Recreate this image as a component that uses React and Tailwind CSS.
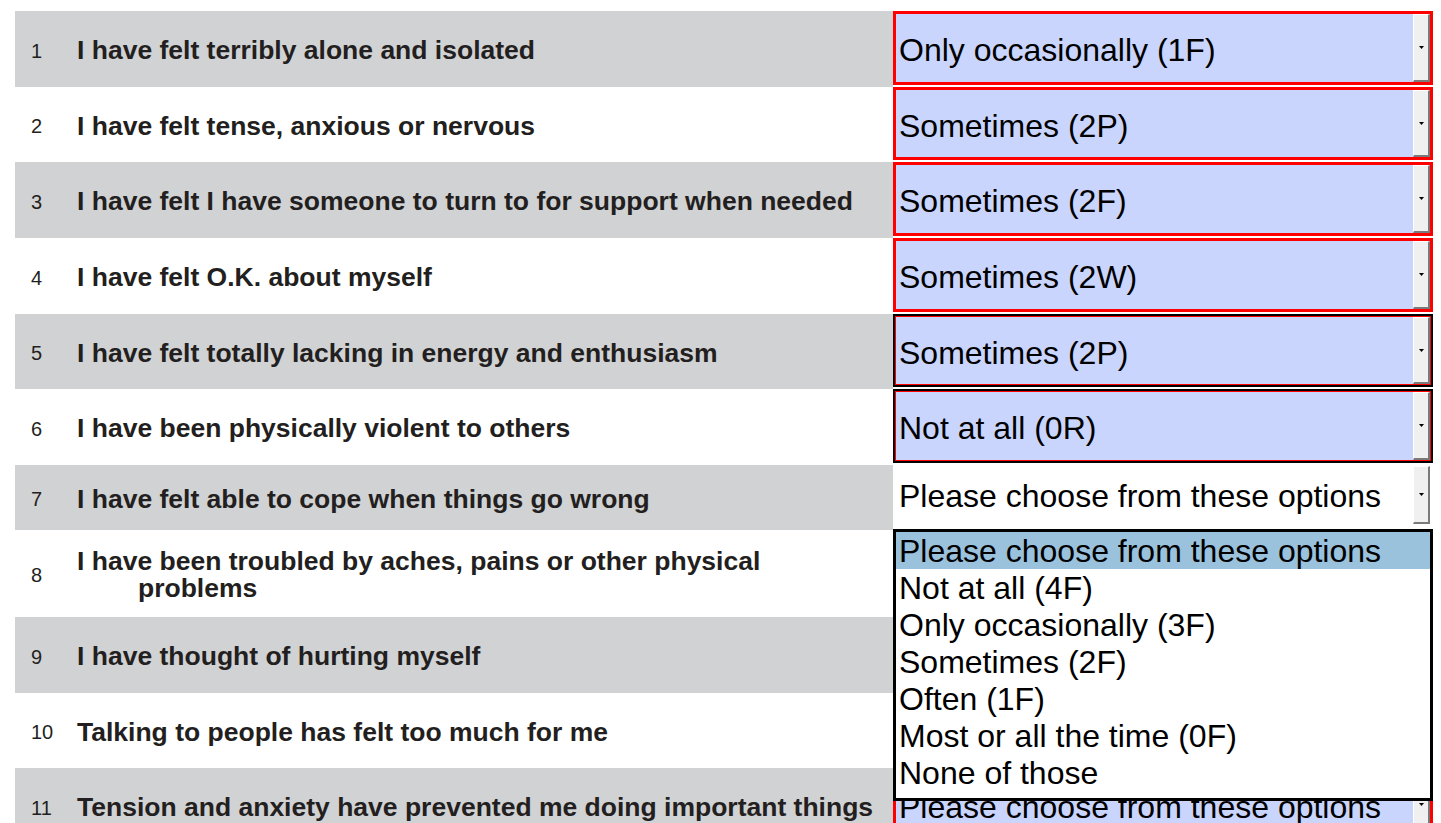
import React from "react";

const rows = [
    { n: 1, text: "I have felt terribly alone and isolated", h: "h-[76px]", kind: "red", value: "Only occasionally (1F)" },
    { n: 2, text: "I have felt tense, anxious or nervous", h: "h-[75px]", kind: "red", value: "Sometimes (2P)" },
    { n: 3, text: "I have felt I have someone to turn to for support when needed", h: "h-[76px]", kind: "red", value: "Sometimes (2F)" },
    { n: 4, text: "I have felt O.K. about myself", h: "h-[76px]", kind: "red", value: "Sometimes (2W)" },
    { n: 5, text: "I have felt totally lacking in energy and enthusiasm", h: "h-[75px]", kind: "focus", value: "Sometimes (2P)" },
    { n: 6, text: "I have been physically violent to others", h: "h-[76px]", kind: "focus", value: "Not at all (0R)" },
    { n: 7, text: "I have felt able to cope when things go wrong", h: "h-[65px]", kind: "plain", value: "Please choose from these options" },
    // rows 8-10: their selects sit under the open list, so no text shown
    { n: 8, text: "I have been troubled by aches, pains or other physical problems", h: "h-[87px]", kind: "red", value: "" },
    { n: 9, text: "I have thought of hurting myself", h: "h-[76px]", kind: "red", value: "" },
    { n: 10, text: "Talking to people has felt too much for me", h: "h-[75px]", kind: "red", value: "" },
    { n: 11, text: "Tension and anxiety have prevented me doing important things", h: "h-[76px]", kind: "red", value: "Please choose from these options" },
];

const options = [
    "Please choose from these options",
    "Not at all (4F)",
    "Only occasionally (3F)",
    "Sometimes (2F)",
    "Often (1F)",
    "Most or all the time (0F)",
    "None of those",
];

const ArrowButton = ({ className = "" }) => (
    <div className={"flex w-[17px] shrink-0 items-center justify-center border-t border-l border-white border-r-2 border-b-2 border-r-[#7a7a7a] border-b-[#7a7a7a] bg-[#f0f0f0] " + className}>
        <svg width="5" height="3" viewBox="0 0 5 3">
            <polygon points="0,0 5,0 2.5,3" fill="#000" />
        </svg>
    </div>
);

const SelectBox = ({ kind, value }) => {
    if (kind === "plain") {
        return (
            <div className="flex h-[60px] w-[537px] self-start bg-white">
                <div className="flex flex-1 items-center pt-[2px] pl-[6px] text-[32px] leading-none text-black">{value}</div>
                <ArrowButton className="my-px" />
            </div>
        );
    }
    const border =
        kind === "focus"
            ? "border-[2px] border-black shadow-[inset_0_0_0_1px_#ff0000]"
            : "border-[3px] border-[#ff0000]";
    return (
        <div className={"flex h-[calc(100%-2px)] w-[540px] self-start bg-[#cad5fd] " + border}>
            <div className={"flex flex-1 items-center pt-[4px] text-[32px] leading-none text-black " + (kind === "focus" ? "pl-[4px]" : "pl-[3px]")}>
                {value}
            </div>
            <ArrowButton className={kind === "focus" ? "my-px mr-px" : ""} />
        </div>
    );
};

export default function App() {
    return (
        <div className="relative h-[823px] overflow-hidden bg-white pt-[11px] pl-[15px] font-['Liberation_Sans',Arial,sans-serif] text-[#231f20]">
            {rows.map((r, i) => (
                <div key={r.n} className={"flex " + r.h}>
                    <div className={"flex w-[878px] items-center pt-[3px] pr-[14px] " + (i % 2 === 0 ? "bg-[#d1d2d4]" : "bg-white")}>
                        <span className="w-[62px] shrink-0 pl-[16px] text-[20px]">{r.n}</span>
                        <span className="pl-[61px] -indent-[61px] text-[26.5px] leading-[27px] font-bold">{r.text}</span>
                    </div>
                    <SelectBox kind={r.kind} value={r.value} />
                </div>
            ))}

            {/* open dropdown list for question 7 */}
            <div className="absolute top-[529px] left-[893px] h-[272px] w-[540px] border-[3px] border-black bg-white">
                {options.map((o, i) => (
                    <div
                        key={o}
                        className={"flex h-[37px] items-center pl-[3px] text-[32px] leading-none text-black " + (i === 0 ? "bg-[#9ac2dc]" : "")}
                    >
                        {o}
                    </div>
                ))}
            </div>
        </div>
    );
}
